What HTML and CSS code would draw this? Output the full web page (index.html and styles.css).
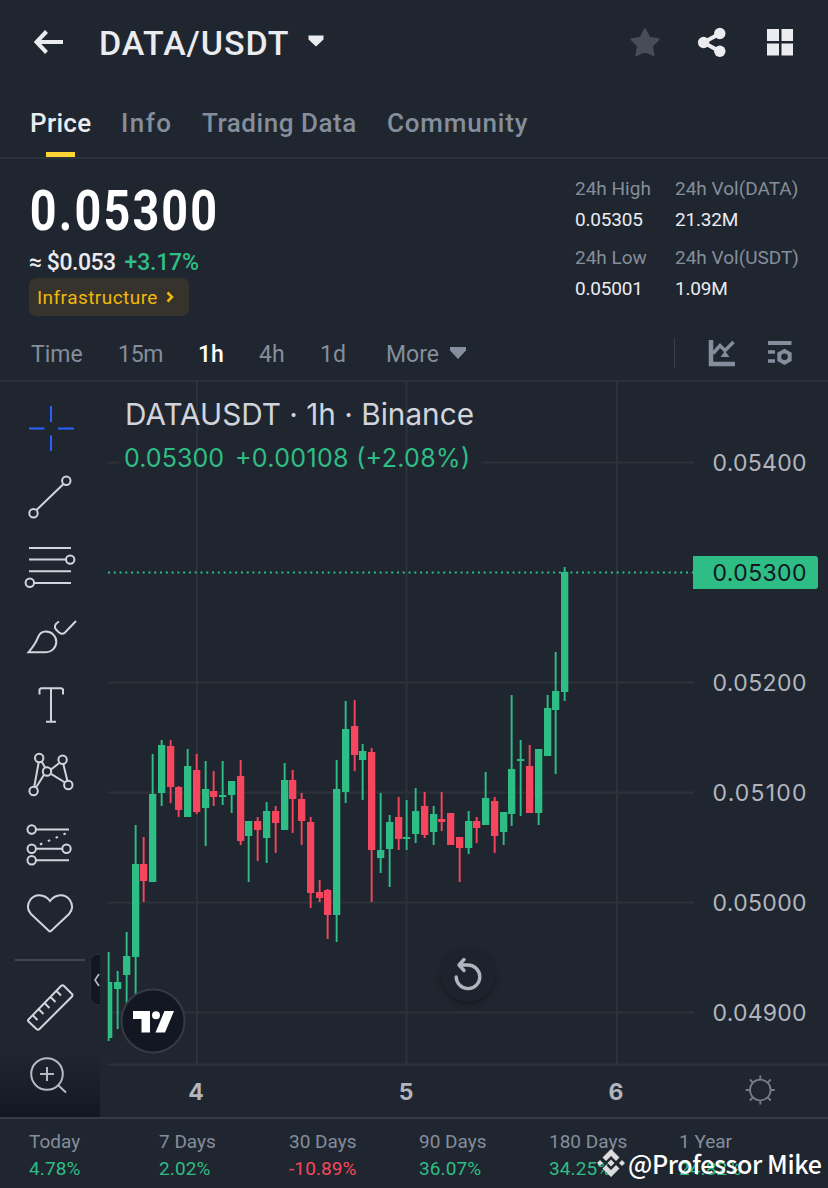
FILE: index.html
```html
<!DOCTYPE html>
<html lang="en">
<head>
<meta charset="utf-8">
<title>DATA/USDT</title>
<link rel="stylesheet" href="styles.css">
</head>
<body>
<main class="app">
  <header class="topbar">
    <svg class="back" width="30" height="26" viewBox="34 29 30 26"><path d="M63 42H37M46.500 31.500L36.500 42l10 10.500" fill="none" stroke="#eaecef" stroke-width="4"/></svg>
    <h1 class="pair">DATA/USDT</h1>
    <svg class="caret" width="16" height="12" viewBox="0 0 16 12"><path d="M0.500 0.500h15v4L8 11.500 0.500 4.500z" fill="#eaecef"/></svg>
    <div class="actions">
      <svg width="30" height="30" viewBox="630 27 30 30"><path d="M645 29.500l4.200 8.600 9 1.300-6.500 6.400 1.600 9.200-8.300-4.400-8.300 4.400 1.600-9.200-6.500-6.400 9-1.300z" fill="#474d57" stroke="#474d57" stroke-width="2.500" stroke-linejoin="round"/></svg>
      <svg width="30" height="30" viewBox="697 27 30 30"><path d="M720 33.500L703.500 42.500 720 51.500" fill="none" stroke="#eaecef" stroke-width="4"/><g fill="#eaecef"><circle cx="719.800" cy="33.500" r="5.700"/><circle cx="703.600" cy="42.500" r="5.700"/><circle cx="719.800" cy="51.200" r="5.700"/></g></svg>
      <svg width="28" height="28" viewBox="766 28 28 28"><path d="M767 29h12v12h-12zM781.500 29h11.500v12h-11.500zM767 43.500h12v12h-12zM781.500 43.500h11.500v12h-11.500z" fill="#eaecef"/></svg>
    </div>
  </header>

  <nav class="tabs">
    <span class="tab tab-price active">Price</span>
    <span class="tab tab-info">Info</span>
    <span class="tab tab-data">Trading Data</span>
    <span class="tab tab-community">Community</span>
  </nav>

  <section class="summary">
    <div class="quote">
      <div class="last"><span class="last-num">0.05300</span></div>
      <div class="approx"><span class="usd">≈ $0.053</span><span class="up">+3.17%</span></div>
      <div class="tag"><span>Infrastructure</span><svg width="8" height="12" viewBox="0 0 8 12"><path d="M1.500 1.500L6 6l-4.500 4.500" fill="none" stroke="#f0b90b" stroke-width="2.500"/></svg></div>
    </div>
    <dl class="day">
      <div><dt>24h High</dt><dd>0.05305</dd></div>
      <div><dt>24h Vol(DATA)</dt><dd>21.32M</dd></div>
      <div><dt>24h Low</dt><dd>0.05001</dd></div>
      <div><dt>24h Vol(USDT)</dt><dd>1.09M</dd></div>
    </dl>
  </section>

  <nav class="intervals">
    <span class="iv">Time</span>
    <span class="iv">15m</span>
    <span class="iv on">1h</span>
    <span class="iv">4h</span>
    <span class="iv">1d</span>
    <span class="iv more">More<svg width="16" height="12" viewBox="0 0 16 12"><path d="M0 0h16v3.500L8 12 0 3.500z" fill="#848e9c"/></svg></span>
    <span class="tools">
      <svg width="28" height="28" viewBox="708 339 28 28"><path d="M711 340v24h24" fill="none" stroke="#848e9c" stroke-width="4.500"/><path d="M713 353.500l7-8 5 5 8.500-8.500" fill="none" stroke="#848e9c" stroke-width="3.500"/><path d="M725 351l4.500 6h-9z" fill="#848e9c"/></svg>
      <svg width="26" height="28" viewBox="767 339 26 28"><path d="M768 341h23.500v4H768zM768 350.200h7v3.600h-7zM768 359.200h7v3.600h-7z" fill="#848e9c"/><path fill-rule="evenodd" d="M784.500 348.700l7.200 4v8.300l-7.200 4-7.200-4v-8.300zM784.500 353.400a3.300 3.300 0 1 0 0 6.600 3.300 3.300 0 0 0 0-6.600z" fill="#848e9c"/></svg>
    </span>
  </nav>

  <section class="chart">
    <aside class="drawing">
      <svg viewBox="0 393 100 70" class="tool"><path d="M51 406v16M51 435.500v15.500M29 428.500h15.500M58 428.500h16" stroke="#2962ff" stroke-width="2"/></svg>
      <svg viewBox="0 463 100 70" class="tool"><path d="M36.500 510L63.500 484"/><circle cx="33.500" cy="513.200" r="4.200"/><circle cx="66.300" cy="480.800" r="4.200"/></svg>
      <svg viewBox="0 533 100 70" class="tool"><path d="M29 548h42M29 559.600h37M29 571.300h42M34 583h37"/><circle cx="70.200" cy="559.600" r="4.200"/><circle cx="29.800" cy="582.800" r="4.200"/></svg>
      <svg viewBox="0 603 100 70" class="tool"><path d="M28.500 652.300h16.500c7 0 11.300-5 11.300-10.500 0-5.500-4.500-10.200-10.500-10.200-3.800 0-6.300 2-7.700 5.500C35.500 644 32 648 28.500 652.300zM59 621.500c-4.500 2.500-5 5.500-3 8l3 3c2 1.500 4.500 1.500 6 0L76 621"/></svg>
      <svg viewBox="0 673 100 70" class="tool"><path d="M39.500 694.500v-5l1.500-1.200h20.500l1.500 1.200v5M51 688.300v33.500M46 721.800h10"/></svg>
      <svg viewBox="0 743 100 70" class="tool"><path d="M38.700 762.200L34.300 786.500M41.700 761.500l3.500 6.300M51 769.500l8-6.200M63.300 764l4.200 17.200M44 774.800L36.200 787.200M51 773.800l14 8.700"/><circle cx="39.200" cy="758" r="4.200"/><circle cx="62.600" cy="759.700" r="4.200"/><circle cx="47" cy="771.500" r="4.200"/><circle cx="33.600" cy="791" r="4.200"/><circle cx="68.300" cy="785" r="4.200"/></svg>
      <svg viewBox="0 813 100 70" class="tool"><path d="M36 829.500h33M36 848.800h26M36 860.300h33"/><path d="M40 844.500L68 832.500" stroke-dasharray="2.500 6"/><circle cx="31.700" cy="829.500" r="4.200"/><circle cx="31.700" cy="848.800" r="4.200"/><circle cx="66.500" cy="848.800" r="4.200"/><circle cx="31.700" cy="860.300" r="4.200"/></svg>
      <svg viewBox="0 883 100 70" class="tool"><path d="M50 901c-6-8-15.500-7-19.500-1.500-4 5.500-2.500 11 .5 14.500L49 931q1 .8 2 0l18-17c3-3.500 4.500-9 .5-14.500C65.500 894 56 893 50 901z"/></svg>
      <hr class="split">
      <svg viewBox="0 968 100 70" class="tool"><path d="M28.500 1019.500L61 986q1.500-1.500 3 0l8 8q1 1 0 2.500L39.500 1029q-1.500 1.500-3 0l-8-7.500q-1-1 0-2zM32.500 1015l5 5M38.500 1009l5 5M44.500 1003l5 5M50.500 997l5 5M56.500 991l4.500 4.500"/></svg>
      <svg viewBox="0 1038 100 70" class="tool dim"><circle cx="47" cy="1074" r="15.800"/><path d="M47 1067v14M40 1074h14M58.500 1085.500l7.500 7"/></svg>
      <button class="collapse" aria-label="Collapse"><svg width="6" height="14" viewBox="0 0 6 14"><path d="M5 1L1 7l4 6" fill="none" stroke="#b2b5be" stroke-width="1.800"/></svg></button>
    </aside>

    <svg class="plot" viewBox="100 381 728 736">
      <path class="grid" d="M197 381v683M406.500 381v683M617 381v683M108 462.500h586M108 682.500h586M108 792.500h586M108 902.500h586M108 1012.500h586M108 1064.500H828"/>
      <path class="legend-back" d="M119 461h364v3H119z"/>
      <text class="symbol" x="125" y="425" textLength="349" lengthAdjust="spacingAndGlyphs">DATAUSDT · 1h · Binance</text>
      <text class="delta" x="124" y="466.500" textLength="100">0.05300</text>
      <text class="delta" x="235" y="466.500" textLength="235">+0.00108 (+2.08%)</text>
      <path d="M108 572.500H693" stroke="#2ebd85" stroke-width="2" stroke-dasharray="2 3.780"/>
      <g id="candles"></g>
      <g class="axis">
        <text x="712.500" y="471" textLength="94">0.05400</text>
        <text x="712.500" y="691" textLength="94">0.05200</text>
        <text x="712.500" y="801" textLength="94">0.05100</text>
        <text x="712.500" y="911" textLength="94">0.05000</text>
        <text x="712.500" y="1021" textLength="94">0.04900</text>
      </g>
      <path d="M693 556h122q3 0 3 3v27q0 3-3 3H693z" fill="#2ebd85"/>
      <text class="mark" x="712.500" y="581" textLength="94">0.05300</text>
      <g class="dates"><text x="196" y="1100">4</text><text x="406" y="1100">5</text><text x="616" y="1100">6</text></g>
      <circle cx="153" cy="1021" r="31.500" fill="#131722" stroke="#363a45" stroke-width="2"/>
      <path d="M133 1011h17v21.500h-8.500v-13.500h-8.500zM164.500 1011h9.500l-9 21.500h-9.500z" fill="#fff"/>
      <circle cx="156" cy="1015.200" r="4" fill="#fff"/>
      <circle class="reset" cx="468" cy="975" r="27"/>
      <path d="M456.200 977A11.800 11.800 0 1 0 468 965H459.500M464 959.500l-5 5.500 5 5.500" fill="none" stroke="#b2b5be" stroke-width="3.400" stroke-linecap="round" stroke-linejoin="round"/>
      <g fill="none" stroke="#787b86" stroke-width="1.800"><circle cx="760.300" cy="1090" r="10.300"/><path d="M760.300 1079.500v-4M760.300 1100.500v4M770.800 1090h4M749.800 1090h-4M767.800 1082.500l3-3M752.800 1082.500l-3-3M767.800 1097.500l3 3M752.800 1097.500l-3 3"/></g>
    </svg>
  </section>

  <footer class="returns">
    <div><span>Today</span><b>4.78%</b></div>
    <div><span>7 Days</span><b>2.02%</b></div>
    <div><span>30 Days</span><b class="down">-10.89%</b></div>
    <div><span>90 Days</span><b>36.07%</b></div>
    <div><span>180 Days</span><b>34.25%</b></div>
    <div><span>1 Year</span><b>24.82%</b></div>
    <div class="credit">
      <svg width="28" height="28" viewBox="0 0 28 28"><path d="M14 0l8.500 8.500-3.500 3.500-5-5-5 5-3.500-3.500zM14 28l8.500-8.500-3.500-3.500-5 5-5-5-3.500 3.500zM14 10.500l3.500 3.500-3.500 3.500-3.500-3.500zM3 11l3 3-3 3-3-3zM25 11l3 3-3 3-3-3z" fill="#dcdcdc"/></svg>
      <span class="handle">@Professor Mike</span>
    </div>
  </footer>
</main>
<script src="chart.js"></script>
</body>
</html>
```
FILE: styles.css
```css
* { box-sizing: border-box; }
body { margin: 0; background: #20262f; font-family: Roboto, "Noto Sans", sans-serif; color: #eaecef; }
.app { width: 828px; height: 1188px; overflow: hidden; display: flex; flex-direction: column; white-space: nowrap; }
svg { display: block; flex: none; }

.topbar { height: 86px; display: flex; align-items: center; padding: 0 34px 2px; flex: none; }
.pair { margin: 2px 0 0 35px; font-size: 34px; font-weight: 500; letter-spacing: 0.9px; line-height: 40px; width: 189px; }
.caret { margin: -2px 0 0 20px; }
.actions { margin-left: auto; display: flex; align-items: center; gap: 38px; }
.actions svg:first-child { margin-right: -1px; }
.actions svg:last-child { margin-left: 1px; }

.tabs { height: 73px; border-bottom: 2px solid #2b3139; display: flex; padding-left: 30px; gap: 30px; flex: none; }
.tab { font-size: 26px; font-weight: 500; line-height: 74px; height: 72px; color: #848e9c; display: block; letter-spacing: 0.55px; }
.tab-price { width: 61px; letter-spacing: 0.3px; }
.tab-info { width: 51px; letter-spacing: 1.4px; }
.tab-data { width: 155px; }
.tab-community { letter-spacing: 0.8px; }
.active { color: #eaecef; display: flex; flex-direction: column; }
.active::after { content: ""; width: 29px; height: 5px; margin: -8px auto 0; background: #fcd535; position: relative; flex: none; }

.summary { height: 166px; display: flex; justify-content: space-between; padding: 0 29px; flex: none; }
.last { height: 87px; padding-top: 21px; font-size: 55px; font-weight: 700; line-height: 62px; color: #fff; }
.last-num { display: inline-block; transform: scaleX(0.85); transform-origin: left; letter-spacing: 2.5px; padding-left: 1px; }
.approx { height: 32px; font-size: 23px; line-height: 33px; font-weight: 500; display: flex; gap: 9px; }
.approx span { letter-spacing: -0.5px; }
.approx .up { letter-spacing: -0.2px; }
.up { color: #2ebd85; }
.tag { width: 160px; height: 38px; border-radius: 7px; background: #35332c; color: #f0b90b; display: flex; align-items: center; gap: 8px; padding-left: 8px; font-size: 19px; letter-spacing: 0.45px; }
.day { margin: 0; width: 224px; padding-top: 16px; display: grid; grid-template-columns: 100px 124px; grid-auto-rows: 69px; }
.day dt { font-size: 19px; line-height: 28px; color: #848e9c; }
.day dd { margin: 2px 0 0; font-size: 19px; line-height: 30px; letter-spacing: -0.2px; }

.intervals { height: 57px; border-bottom: 2px solid #2b3139; display: flex; align-items: center; padding: 4px 35px 0 31px; font-size: 23px; color: #848e9c; flex: none; }
.iv:nth-child(1) { width: 87px; }
.iv:nth-child(2) { width: 80px; letter-spacing: -0.3px; }
.iv:nth-child(3) { width: 61px; }
.iv:nth-child(4) { width: 61px; }
.iv:nth-child(5) { width: 66px; }
.on { color: #fff; font-weight: 500; }
.more { display: flex; align-items: center; gap: 11px; }
.more svg { margin-top: -3px; }
.tools { margin: -4px 0 0 auto; height: 30px; border-left: 1px solid #3a414b; padding-left: 33px; display: flex; gap: 31px; align-items: center; }

.chart { height: 735px; display: grid; grid-template-columns: 100px 728px; flex: none; }
.drawing { position: relative; padding-top: 11px; background: linear-gradient(transparent 670px, #131722 735px); }
.tool { width: 100px; height: 70px; fill: none; stroke: #d1d4dc; stroke-width: 2; }
.dim { opacity: 0.85; }
.split { height: 2px; margin: 6px 15px 7px; border: 0; background: #434651; }
.collapse { position: absolute; right: 0; top: 572px; width: 10px; height: 51px; padding: 0 0 0 3px; border: 1px solid #292d37; border-right: 0; border-radius: 7px 0 0 7px; background: #131722; display: flex; align-items: center; }
.plot { width: 728px; height: 736px; margin-top: -1px; font-family: Inter, sans-serif; }
.grid { stroke: #2c313a; stroke-width: 2; }
.legend-back { fill: #20262f; }
.symbol { font-size: 30px; fill: #d1d4dc; }
.delta { font-size: 25px; fill: #2ebd85; }
.axis { font-size: 23px; fill: #b2b5be; }
.mark { font-size: 23px; fill: #131722; }
.dates { font-size: 23px; font-weight: 700; fill: #b2b5be; text-anchor: middle; }
.reset { fill: #1e222d; filter: drop-shadow(0 2px 3px rgba(0, 0, 0, 0.35)); }
.rise { fill: #2ebd85; }
.fall { fill: #f6465d; }

.returns { position: relative; height: 71px; border-top: 2px solid #363c45; display: grid; grid-template-columns: repeat(6, 130px); padding: 8px 0 0 29px; flex: none; }
.returns div > span { display: block; font-size: 19px; line-height: 30px; color: #848e9c; }
.returns b { display: block; font-size: 19px; line-height: 24px; font-weight: 400; color: #2ebd85; letter-spacing: 0.1px; }
.returns .down { color: #f6465d; }
.returns .credit { position: absolute; left: 597px; top: 26px; height: 36px; display: flex; align-items: center; gap: 3px; }
.returns .credit .handle { font-family: "Noto Sans CJK SC", "Noto Sans", sans-serif; font-size: 25px; font-weight: 500; line-height: 36px; letter-spacing: -0.4px; color: #fff; margin-top: -1px; }
```
FILE: chart.js
```javascript
// Each candle: direction, high, body top, body bottom, low (in plot units).
const candles = [
  ["rise", 951.7, 982.3, 1038.3, 1040.7], ["rise", 971, 982, 988.7, 1028.7],
  ["rise", 932.3, 956, 975, 1005], ["rise", 825, 863.7, 956.7, 1000],
  ["fall", 837.3, 863.7, 881, 901.7], ["rise", 754, 793.7, 882.3, 882.3],
  ["rise", 739.7, 745, 793, 805.7], ["fall", 740, 746, 787, 803],
  ["fall", 786, 786.7, 810, 817.3], ["rise", 749.3, 766, 817.3, 817.3],
  ["fall", 754, 770, 812, 813.7], ["rise", 761.3, 789, 808.3, 846],
  ["fall", 771, 791, 797, 805.7], ["rise", 761.3, 795.3, 797.3, 804.7],
  ["rise", 781, 781, 795, 813.3], ["fall", 760, 775.7, 841.3, 845],
  ["rise", 821, 821, 836, 881.7], ["fall", 816.7, 821, 830, 860.7],
  ["rise", 802, 810.7, 837.7, 862.7], ["fall", 806, 810.7, 822.7, 852.7],
  ["rise", 763, 780, 830, 830], ["fall", 770, 780, 799.3, 833],
  ["fall", 793.3, 799, 821, 844.7], ["fall", 817, 821.7, 893, 908],
  ["fall", 880, 892, 898, 902], ["fall", 889, 890, 915, 938.7],
  ["rise", 760, 789, 915, 941.7], ["rise", 701.3, 729, 792, 803.3],
  ["fall", 700, 726, 754.7, 770.7], ["rise", 744, 750.7, 760.3, 800],
  ["fall", 748, 751.7, 850, 901.7], ["rise", 793.3, 849.7, 858, 872.7],
  ["rise", 815.3, 821.7, 849, 886.7], ["fall", 797, 816.7, 839, 849.7],
  ["rise", 800, 836.7, 839, 849.7], ["rise", 788, 810.7, 834, 843],
  ["fall", 792, 806, 835, 837.7], ["rise", 806, 814, 832, 845],
  ["fall", 792, 818.7, 821.7, 830.7], ["fall", 813.3, 813.3, 845.3, 845.3],
  ["fall", 836.7, 837.3, 848, 881.7], ["rise", 811, 821, 848, 853.7],
  ["fall", 817, 821, 828, 843], ["rise", 772.3, 798, 825, 825],
  ["fall", 797, 801.3, 836, 852.7], ["rise", 812, 812, 831.7, 845],
  ["rise", 695.3, 769, 814.3, 826.3], ["rise", 740.3, 758.5, 760.7, 815.7],
  ["fall", 745, 766, 813, 813], ["rise", 749, 749, 813, 824.7],
  ["rise", 695, 707.7, 756, 756], ["rise", 652.3, 691, 709.7, 773.7],
  ["rise", 567, 572, 691.7, 701.3]
];
const NS = "http://www.w3.org/2000/svg";
const layer = document.getElementById("candles");

function bar(parent, cls, x, y, w, h) {
  const r = document.createElementNS(NS, "rect");
  r.setAttribute("class", cls);
  r.setAttribute("x", x);
  r.setAttribute("y", Math.round(y));
  r.setAttribute("width", w);
  r.setAttribute("height", Math.max(0, Math.round(y + h) - Math.round(y)));
  parent.appendChild(r);
}

candles.forEach(([dir, high, top, bottom, low], i) => {
  const x = Math.floor(108.7 + i * 8.767) + 0.5;
  const g = document.createElementNS(NS, "g");
  g.setAttribute("class", dir);
  bar(g, "wick", x - 0.8, high, 1.9, low - high);
  const left = Math.max(108, x - 3.5);
  bar(g, "body", left, top, x + 3.8 - left, bottom - top);
  layer.appendChild(g);
});
```
